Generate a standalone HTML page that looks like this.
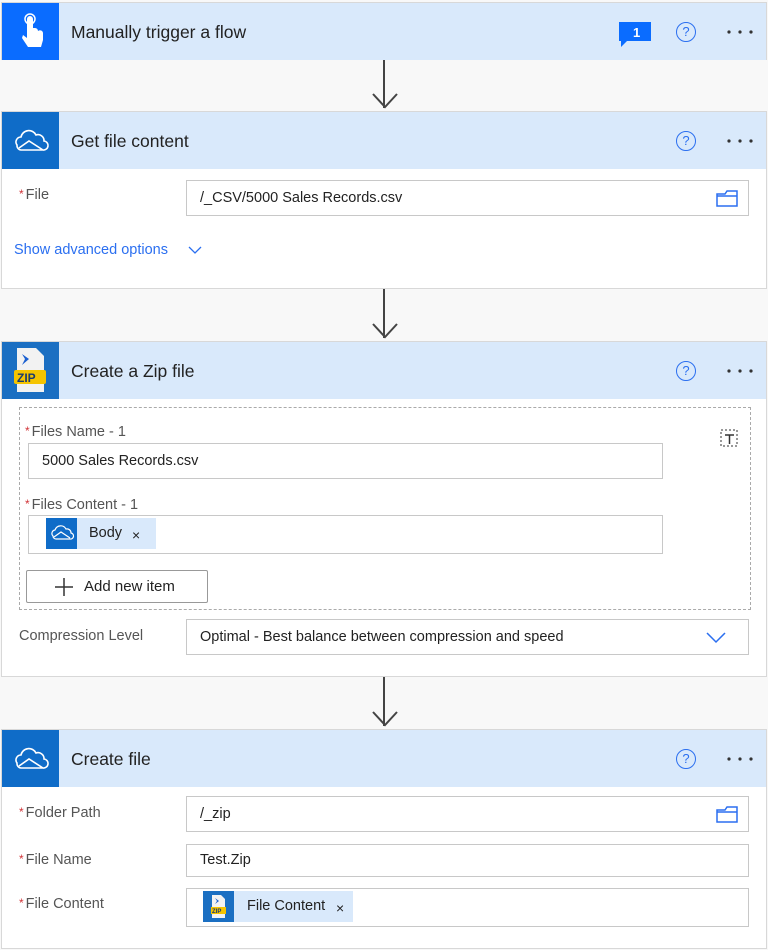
<!DOCTYPE html>
<html><head><style>
*{box-sizing:border-box;margin:0;padding:0}
body{width:768px;height:950px;background:#f8f8f8;font-family:"Liberation Sans",sans-serif;position:relative;overflow:hidden;color:#222}
.a{position:absolute}
.card{position:absolute;left:1px;width:766px;background:#fff;border:1px solid #d8d8d8}
.hdr{position:absolute;left:0;top:0;width:100%;height:57px;background:#d9e9fb}
.ico{position:absolute;left:0;top:0;width:57px;height:57px}
.title{position:absolute;left:69px;top:19px;font-size:17.5px;color:#222}
.help{position:absolute;width:20px;height:20px;border:1.5px solid #2b6ff0;border-radius:50%;color:#2b6ff0;font-size:13px;text-align:center;line-height:17px}
.dots{position:absolute;width:26px;height:4px}
.lbl{position:absolute;font-size:14.5px;color:#555}
.lbl b{color:#d13438;font-weight:normal;font-size:12px;vertical-align:top;margin-right:2px}
.inp{position:absolute;border:1px solid #c8c8c8;background:#fff;font-size:14.5px;color:#222;padding-left:13px}
.arrow{position:absolute;left:383px;width:2px;background:#444}
</style></head><body>

<!-- card1 -->
<div class="card" style="top:2px;height:58px">
 <div class="hdr">
  <div class="ico" style="background:#0a6cff"><svg width="57" height="57"><path d="M25 30V16a3 3 0 0 1 6 0v9h2a3 3 0 0 1 3 3 3 3 0 0 1 5 2v7l-2 7H26l-6-9 1-3 4 3z" fill="#fff"/><circle cx="28" cy="16" r="5" fill="none" stroke="#fff" stroke-width="1.5"/></svg></div>
  <div class="title">Manually trigger a flow</div>
  <svg class="a" style="left:616px;top:19px" width="33" height="26"><path d="M1 0h32v19H9l-6 6v-6H1z" fill="#0a6cff"/><text x="15" y="15" fill="#fff" font-size="13" font-weight="bold" font-family="Liberation Sans">1</text></svg>
  <div class="help" style="left:674px;top:19px">?</div>
  <svg class="dots" style="left:725px;top:27px"><circle cx="2" cy="2" r="1.6" fill="#333"/><circle cx="13" cy="2" r="1.6" fill="#333"/><circle cx="24" cy="2" r="1.6" fill="#333"/></svg>
 </div>
</div>
<div class="arrow" style="top:60px;height:48px"></div>
<svg class="a" style="left:372px;top:92px" width="26" height="18"><path d="M1 2l12 13 12-13" fill="none" stroke="#444" stroke-width="2"/></svg>

<!-- card2 -->
<div class="card" style="top:111px;height:178px">
 <div class="hdr">
  <div class="ico" style="background:#0f6cc8"><svg width="57" height="57"><path d="M15 33a5 5 0 0 1 4-8 8 8 0 0 1 15-2 6 6 0 0 1 8 6 4.5 4.5 0 0 1-1 9H19a4.5 4.5 0 0 1-4-5zM17 36l10-7 14 9" fill="none" stroke="#fff" stroke-width="1.6"/></svg></div>
  <div class="title">Get file content</div>
  <div class="help" style="left:674px;top:19px">?</div>
  <svg class="dots" style="left:725px;top:27px"><circle cx="2" cy="2" r="1.6" fill="#333"/><circle cx="13" cy="2" r="1.6" fill="#333"/><circle cx="24" cy="2" r="1.6" fill="#333"/></svg>
 </div>
 <div class="lbl" style="left:17px;top:75px"><b>*</b>File</div>
 <div class="inp" style="left:184px;top:68px;width:563px;height:36px;line-height:34px">/_CSV/5000 Sales Records.csv
  <svg class="a" style="right:10px;top:9px" width="22" height="17"><path d="M1 4h8l2-3h10v15H1z M1 6h20" fill="none" stroke="#2b6ff0" stroke-width="1.5"/></svg></div>
 <div class="a" style="left:12px;top:130px;font-size:14.5px;color:#2b6ff0">Show advanced options</div>
 <svg class="a" style="left:186px;top:134px" width="14" height="9"><path d="M1 1l6 6 6-6" fill="none" stroke="#2b6ff0" stroke-width="1.3"/></svg>
</div>
<div class="arrow" style="top:289px;height:49px"></div>
<svg class="a" style="left:372px;top:322px" width="26" height="18"><path d="M1 2l12 13 12-13" fill="none" stroke="#444" stroke-width="2"/></svg>

<!-- card3 -->
<div class="card" style="top:341px;height:336px">
 <div class="hdr">
  <div class="ico" style="background:#1b6fc2"><svg width="57" height="57"><path d="M15 6h19l8 8v36H15z" fill="#f2f2f2"/><path d="M20 12l7 5-7 6 3-6z" fill="#1a5fd0"/><rect x="12" y="28" width="32" height="14" rx="2" fill="#f5c400"/><text x="15" y="40" font-size="12" font-weight="bold" fill="#1a3a6e" font-family="Liberation Sans">ZIP</text></svg></div>
  <div class="title">Create a Zip file</div>
  <div class="help" style="left:674px;top:19px">?</div>
  <svg class="dots" style="left:725px;top:27px"><circle cx="2" cy="2" r="1.6" fill="#333"/><circle cx="13" cy="2" r="1.6" fill="#333"/><circle cx="24" cy="2" r="1.6" fill="#333"/></svg>
 </div>
 <div class="a" style="left:17px;top:65px;width:732px;height:203px;border:1px dashed #aaa"></div>
 <svg class="a" style="left:716px;top:85px" width="22" height="22"><rect x="3" y="3" width="16" height="16" fill="none" stroke="#333" stroke-dasharray="2 2"/><path d="M7 8h9M11.5 8v9" stroke="#333" stroke-width="1.5"/></svg>
 <div class="lbl" style="left:23px;top:82px"><b>*</b>Files Name - 1</div>
 <div class="inp" style="left:26px;top:101px;width:635px;height:36px;line-height:34px">5000 Sales Records.csv</div>
 <div class="lbl" style="left:23px;top:155px"><b>*</b>Files Content - 1</div>
 <div class="inp" style="left:26px;top:173px;width:635px;height:39px;padding:0">
  <div class="a" style="left:17px;top:2px;width:110px;height:31px;background:#d9e9fb"></div>
  <div class="a" style="left:17px;top:2px;width:31px;height:31px;background:#0f6cc8"><svg width="31" height="31"><path d="M7 18a3.5 3.5 0 0 1 2-6 6 6 0 0 1 11-1 4 4 0 0 1 5 4 3 3 0 0 1-1 6H10a3 3 0 0 1-3-3zM8 19l7-5 9 6" fill="none" stroke="#fff" stroke-width="1.2"/></svg></div>
  <div class="a" style="left:60px;top:9px;font-size:14.5px">Body</div>
  <div class="a" style="left:103px;top:11px;font-size:14px">×</div>
 </div>
 <div class="a" style="left:24px;top:228px;width:182px;height:33px;border:1px solid #999;border-radius:2px;background:#fff">
  <svg class="a" style="left:27px;top:6px" width="20" height="20"><path d="M10 1v18M1 10h18" stroke="#333" stroke-width="1.5"/></svg>
  <div class="a" style="left:57px;top:7px;font-size:15px;color:#222">Add new item</div>
 </div>
 <div class="lbl" style="left:17px;top:286px">Compression Level</div>
 <div class="inp" style="left:184px;top:277px;width:563px;height:36px;line-height:34px">Optimal - Best balance between compression and speed
  <svg class="a" style="right:22px;top:12px" width="20" height="12"><path d="M1 1l9 9 9-9" fill="none" stroke="#2b6ff0" stroke-width="1.5"/></svg></div>
</div>
<div class="arrow" style="top:677px;height:49px"></div>
<svg class="a" style="left:372px;top:710px" width="26" height="18"><path d="M1 2l12 13 12-13" fill="none" stroke="#444" stroke-width="2"/></svg>

<!-- card4 -->
<div class="card" style="top:729px;height:220px">
 <div class="hdr">
  <div class="ico" style="background:#0f6cc8"><svg width="57" height="57"><path d="M15 33a5 5 0 0 1 4-8 8 8 0 0 1 15-2 6 6 0 0 1 8 6 4.5 4.5 0 0 1-1 9H19a4.5 4.5 0 0 1-4-5zM17 36l10-7 14 9" fill="none" stroke="#fff" stroke-width="1.6"/></svg></div>
  <div class="title">Create file</div>
  <div class="help" style="left:674px;top:19px">?</div>
  <svg class="dots" style="left:725px;top:27px"><circle cx="2" cy="2" r="1.6" fill="#333"/><circle cx="13" cy="2" r="1.6" fill="#333"/><circle cx="24" cy="2" r="1.6" fill="#333"/></svg>
 </div>
 <div class="lbl" style="left:17px;top:75px"><b>*</b>Folder Path</div>
 <div class="inp" style="left:184px;top:66px;width:563px;height:36px;line-height:34px">/_zip
  <svg class="a" style="right:10px;top:9px" width="22" height="17"><path d="M1 4h8l2-3h10v15H1z M1 6h20" fill="none" stroke="#2b6ff0" stroke-width="1.5"/></svg></div>
 <div class="lbl" style="left:17px;top:122px"><b>*</b>File Name</div>
 <div class="inp" style="left:184px;top:114px;width:563px;height:33px;line-height:31px">Test.Zip</div>
 <div class="lbl" style="left:17px;top:166px"><b>*</b>File Content</div>
 <div class="inp" style="left:184px;top:158px;width:563px;height:39px;padding:0">
  <div class="a" style="left:16px;top:2px;width:150px;height:31px;background:#d9e9fb"></div>
  <div class="a" style="left:16px;top:2px;width:31px;height:31px;background:#1b6fc2"><svg width="31" height="31"><path d="M9 4h9l4 4v19H9z" fill="#f2f2f2"/><path d="M12 7l4 3-4 3 2-3z" fill="#1a5fd0"/><rect x="8" y="16" width="15" height="7" fill="#f5c400"/><text x="9" y="22" font-size="6" font-weight="bold" fill="#1a3a6e" font-family="Liberation Sans">ZIP</text></svg></div>
  <div class="a" style="left:60px;top:9px;font-size:14.5px">File Content</div>
  <div class="a" style="left:149px;top:11px;font-size:14px">×</div>
 </div>
</div>
</body></html>
